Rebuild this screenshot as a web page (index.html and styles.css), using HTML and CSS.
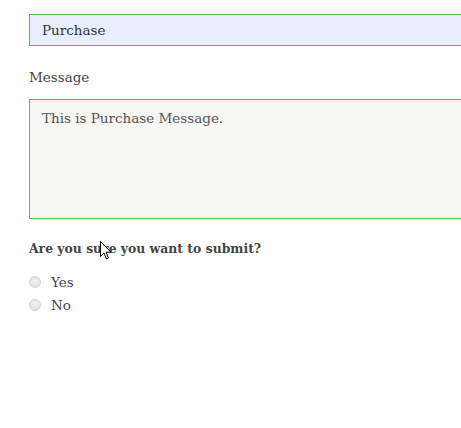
FILE: index.html
```html
<!DOCTYPE html>
<html>
<head>
<meta charset="utf-8">
<link rel="stylesheet" href="styles.css">
</head>
<body>
<form class="form">
  <input class="field" type="text" value="Purchase">
  <label class="label">Message</label>
  <textarea class="area">This is Purchase Message.</textarea>
  <div class="question">Are you sure you want to submit?</div>
  <div class="radios">
    <label class="opt"><span class="radio"></span>Yes</label>
    <label class="opt"><span class="radio"></span>No</label>
  </div>
</form>
<svg class="cursor" width="12" height="19" viewBox="0 0 12 19">
  <path d="M0.5 0.5 L0.5 15.5 L4 12 L6.5 18 L8.5 17 L6 11.2 L11 11.2 Z" fill="#fff" stroke="#000" stroke-width="1" stroke-linejoin="miter"/>
</svg>
</body>
</html>
```
FILE: styles.css
```css
html, body {
  margin: 0;
  padding: 0;
  overflow: hidden;
  background: #fff;
}
body {
  width: 461px;
  height: 428px;
  position: relative;
  font-family: "DejaVu Serif", "Liberation Serif", serif;
}
.form {
  display: flex;
  flex-direction: column;
  padding: 14px 0 0 29px;
  width: 470px;
}
.field {
  box-sizing: border-box;
  width: 470px;
  height: 32px;
  border: 1px solid #5cb85c;
  background: #e8f0fe;
  padding: 0 12px;
  font-family: inherit;
  font-size: 13.5px;
  color: #333;
  outline: none;
  margin: 0;
}
.label {
  margin-top: 22px;
  font-size: 13.5px;
  color: #444;
  font-weight: normal;
  line-height: 18px;
}
.area {
  box-sizing: border-box;
  margin-top: 13px;
  width: 470px;
  height: 120px;
  border: 1px solid #5cb85c;
  background: #f6f6f4;
  padding: 10px 12px;
  font-family: inherit;
  font-size: 13.5px;
  color: #555;
  resize: none;
  outline: none;
}
.question {
  margin-top: 21px;
  font-size: 12.4px;
  font-weight: bold;
  color: #444;
  line-height: 18px;
}
.radios {
  display: flex;
  flex-direction: column;
  gap: 5px;
  margin-top: 15px;
}
.opt {
  display: flex;
  align-items: center;
  gap: 10px;
  font-size: 13.5px;
  color: #444;
  line-height: 18px;
}
.radio {
  box-sizing: border-box;
  width: 12px;
  height: 12px;
  border-radius: 50%;
  border: 1px solid #d9d2c4;
  background: radial-gradient(circle at 50% 40%, #f2f2f2, #dcdcdc);
}
.cursor {
  position: absolute;
  left: 100px;
  top: 241px;
}
```
